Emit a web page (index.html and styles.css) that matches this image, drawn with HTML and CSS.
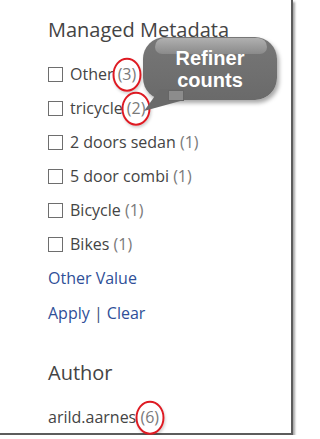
FILE: index.html
```html
<!DOCTYPE html>
<html lang="en">
<head>
<meta charset="utf-8">
<title>Refiners</title>
<link rel="stylesheet" href="styles.css">
</head>
<body>
<div class="frame">
  <div class="panel">
    <h2 class="heading">Managed Metadata</h2>
    <ul class="refiners">
      <li class="row"><span class="box"></span><span class="label">Other <span class="count marked">(3)</span></span></li>
      <li class="row"><span class="box"></span><span class="label">tricycle <span class="count marked">(2)</span></span></li>
      <li class="row"><span class="box"></span><span class="label">2 doors sedan <span class="count">(1)</span></span></li>
      <li class="row"><span class="box"></span><span class="label">5 door combi <span class="count">(1)</span></span></li>
      <li class="row"><span class="box"></span><span class="label">Bicycle <span class="count">(1)</span></span></li>
      <li class="row"><span class="box"></span><span class="label">Bikes <span class="count">(1)</span></span></li>
    </ul>
    <div class="row"><a class="link" href="#">Other Value</a></div>
    <div class="row actions"><a class="link" href="#">Apply</a><span class="sep">&nbsp;|&nbsp;</span><a class="link" href="#">Clear</a></div>
    <h2 class="heading author">Author</h2>
    <div class="row"><span class="label">arild.aarnes <span class="count marked">(6)</span></span></div>
  </div>
  <div class="callout">
    <svg class="tail" width="60" height="40" viewBox="0 0 60 40" aria-hidden="true">
      <path d="M4 26 L20 4 L44 4 L44 15 Z" fill="#6a6a6a"/>
    </svg>
    <div class="notch"></div>
    <div class="gloss"></div>
    <div class="callout-text">Refiner<br>counts</div>
  </div>
</div>
</body>
</html>
```

FILE: styles.css
```css
html, body {
  margin: 0;
  padding: 0;
  background: #ffffff;
}

.frame {
  position: relative;
  width: 291px;
  height: 433px;
  background: #ffffff;
  border-right: 2px solid #5c5c5c;
  border-bottom: 2px solid #5c5c5c;
  box-shadow: 2px 2px 2px rgba(0, 0, 0, 0.35);
}

.panel {
  padding: 16px 0 0 48px;
  font-family: "Open Sans", "Noto Sans", sans-serif;
  color: #444444;
}

.heading {
  margin: 0;
  font-size: 20px;
  line-height: 28px;
  font-weight: 400;
  color: #444444;
}

.heading.author {
  margin-top: 29px;
}

.refiners {
  list-style: none;
  margin: 13px 0 0 0;
  padding: 0;
}

.row {
  display: flex;
  align-items: center;
  height: 34px;
  font-size: 16px;
  line-height: 22px;
}

.author + .row {
  margin-top: 13px;
}

.actions {
  margin-top: 1px;
}

.box {
  width: 13px;
  height: 13px;
  border: 1px solid #6e6e6e;
  background: #ffffff;
  margin-right: 7px;
  flex: none;
}

.label {
  color: #444444;
  white-space: nowrap;
}

.count {
  color: #7a7a7a;
}

.marked {
  position: relative;
}

.marked::after {
  content: "";
  position: absolute;
  left: 50%;
  top: 50%;
  width: 25px;
  height: 30px;
  transform: translate(-50%, -48%);
  border: 2px solid #de1a22;
  border-radius: 50%;
  box-shadow: 1px 2px 3px rgba(0, 0, 0, 0.18);
}

.link {
  color: #2f4f98;
  text-decoration: none;
}

.sep {
  color: #3d4f7c;
}

.callout {
  position: absolute;
  z-index: 5;
  left: 143px;
  top: 37px;
  width: 134px;
  height: 63px;
  border-radius: 22px;
  background: linear-gradient(#777777, #6a6a6a);
  box-shadow: 2px 3px 4px rgba(0, 0, 0, 0.35);
}

.tail {
  position: absolute;
  display: block;
  left: -3px;
  top: 48px;
  z-index: 1;
}

.notch {
  position: absolute;
  z-index: 2;
  left: 25px;
  top: 53px;
  width: 14px;
  height: 9px;
  background: #8c8c8c;
  border: 1px solid #666666;
}

.gloss {
  position: absolute;
  left: 12px;
  right: 10px;
  top: 1px;
  height: 16px;
  border-radius: 10px 10px 8px 8px;
  background: linear-gradient(#b0b0b0, #8a8a8a);
}

.callout-text {
  position: relative;
  margin-top: 10px;
  text-align: center;
  font-family: "Liberation Sans", Arial, sans-serif;
  font-weight: 700;
  font-size: 20px;
  line-height: 22px;
  color: #ffffff;
}
```
